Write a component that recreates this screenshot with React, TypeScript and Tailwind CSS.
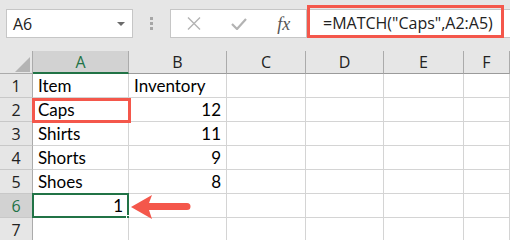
import React from "react";

const cols = [
  { key: "A", w: "w-[96px]" },
  { key: "B", w: "w-[98px]" },
  { key: "C", w: "w-[79px]" },
  { key: "D", w: "w-[78px]" },
  { key: "E", w: "w-[80px]" },
  { key: "F", w: "w-[46px]" },
];

const data: { a: string; b: string }[] = [
  { a: "Item", b: "Inventory" },
  { a: "Caps", b: "12" },
  { a: "Shirts", b: "11" },
  { a: "Shorts", b: "9" },
  { a: "Shoes", b: "8" },
  { a: "1", b: "" },
  { a: "", b: "" },
];

const uiFont = "font-['Open_Sans',sans-serif]";
const cellFont = "font-['Lato',sans-serif]";

export default function App() {
  return (
    <div className="relative w-[510px] h-[240px] overflow-hidden bg-[#e6e6e6]">
      {/* Toolbar */}
      <div className="flex items-center h-[51px] pb-[4px] pl-[6px]">
        <div className="flex items-center justify-between w-[127px] h-[29px] bg-white border border-[#c6c6c6] pl-[6px] pr-[7px]">
          <span className={`${uiFont} text-[16px] text-[#222]`}>A6</span>
          <svg width="8" height="4" viewBox="0 0 8 4">
            <path d="M0 0 L8 0 L4 4 Z" fill="#6b6b6b" />
          </svg>
        </div>
        <div className="flex flex-col gap-[2px] w-[37px] items-center">
          <div className="w-[3px] h-[3px] bg-[#a6a6a6]" />
          <div className="w-[3px] h-[3px] bg-[#a6a6a6]" />
          <div className="w-[3px] h-[3px] bg-[#a6a6a6]" />
        </div>
        <div className="flex items-center w-[137px] h-[29px] bg-white border border-[#c6c6c6]">
          <div className="w-[46px] flex justify-center">
            <svg width="14" height="13" viewBox="0 0 14 13">
              <path d="M1 0.5 L13 12.5 M13 0.5 L1 12.5" stroke="#b3b3b3" strokeWidth="1.4" />
            </svg>
          </div>
          <div className="w-[46px] flex justify-center">
            <svg width="16" height="12" viewBox="0 0 16 12">
              <path d="M1 6 L6 11 L15 1" stroke="#b3b3b3" strokeWidth="2.2" fill="none" />
            </svg>
          </div>
          <div className="w-[45px] flex justify-center">
            <span className="font-['Liberation_Serif',serif] italic text-[18px] text-[#555] leading-none">
              fx
            </span>
          </div>
        </div>
        <div className="relative flex-1 h-[29px] bg-white border-y border-[#c6c6c6]">
          <div className="absolute left-0 top-[-5px] w-[197px] h-[33px] border-[3px] border-[#f4574b]" />
          <div className={`${uiFont} text-[16px] text-[#222] leading-[27px] pl-[16px]`}>
            =MATCH("Caps",A2:A5)
          </div>
        </div>
      </div>

      {/* Grid */}
      <div className="flex flex-col">
        {/* Column headers */}
        <div className="flex h-[23px]">
          <div className="relative w-[33px] h-full border-b border-r border-[#ababab]">
            <svg className="absolute left-[15px] top-[6px]" width="15" height="15" viewBox="0 0 15 15">
              <path d="M15 0 L15 15 L0 15 Z" fill="#b4b4b4" />
            </svg>
          </div>
          {cols.map((c) => {
            const sel = c.key === "A";
            return (
              <div
                key={c.key}
                className={`${c.w} h-full flex items-center justify-center border-r border-[#ababab] ${uiFont} text-[16px] ${
                  sel
                    ? "bg-[#d2d2d2] text-[#217346] border-b-2 border-b-[#217346]"
                    : "text-[#222] border-b border-b-[#9b9b9b]"
                }`}
              >
                {c.key}
              </div>
            );
          })}
        </div>

        {/* Rows */}
        {data.map((r, i) => {
          const rowNum = i + 1;
          const sel = rowNum === 6;
          return (
            <div key={rowNum} className="flex h-[24px]">
              <div
                className={`w-[33px] h-full flex items-center justify-center border-r border-[#ababab] border-b border-b-[#c8c8c8] ${uiFont} text-[16px] ${
                  sel ? "bg-[#d2d2d2] text-[#217346]" : "text-[#222]"
                }`}
              >
                {rowNum}
              </div>
              {cols.map((c) => {
                let text = "";
                let right = false;
                if (c.key === "A") {
                  text = r.a;
                  right = rowNum === 6;
                }
                if (c.key === "B") {
                  text = r.b;
                  right = rowNum !== 1;
                }
                return (
                  <div
                    key={c.key}
                    className={`relative ${c.w} h-full bg-white border-r border-b border-[#d4d4d4] ${cellFont} text-[17px] text-black leading-[23px] px-[5px] whitespace-nowrap ${
                      right ? "text-right" : "text-left"
                    }`}
                  >
                    {text}
                    {c.key === "A" && sel && (
                      <>
                        <div className="absolute left-[-1px] top-[-1px] right-[-1px] bottom-[-1px] border-2 border-[#217346]" />
                        <div className="absolute right-[-4px] bottom-[-4px] w-[6px] h-[6px] bg-[#217346] border border-white" />
                      </>
                    )}
                  </div>
                );
              })}
            </div>
          );
        })}
      </div>

      {/* Annotation: red box around A2 */}
      <div className="absolute left-[32px] top-[98px] w-[99px] h-[25px] border-[3px] border-[#f4574b]" />

      {/* Annotation: arrow */}
      <svg className="absolute left-0 top-0" width="510" height="240" viewBox="0 0 510 240">
        <path
          d="M131 207 L152 195 L149 203 L187 203 A3.5 3.5 0 0 1 187 210 L149 210 L152 219 Z"
          fill="#f4574b"
        />
      </svg>
    </div>
  );
}
